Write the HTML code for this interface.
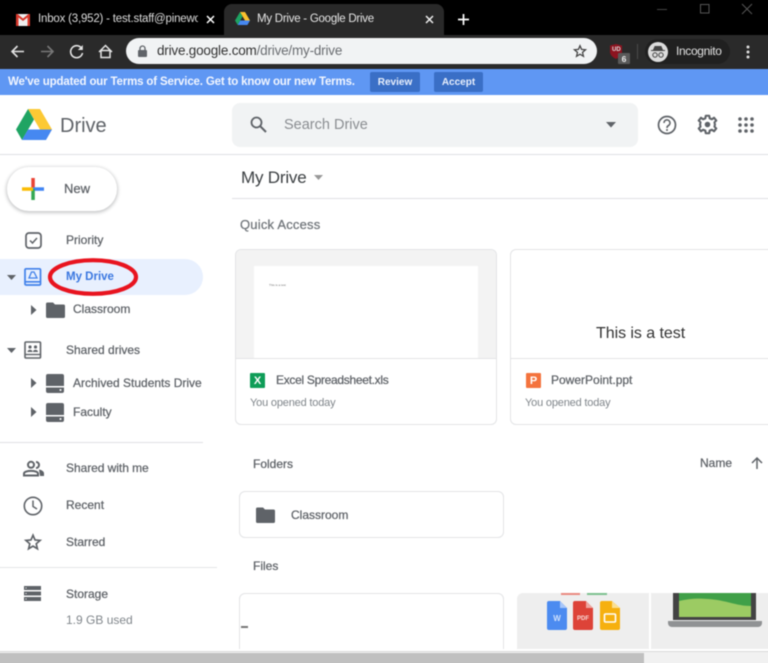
<!DOCTYPE html>
<html><head><meta charset="utf-8"><style>
html,body{margin:0;padding:0;background:#fff}
#w{position:relative;width:768px;height:663px;overflow:hidden;background:#fff}
#p{position:absolute;left:0;top:0;width:768px;height:663px;background:#fff;font-family:"Liberation Sans",sans-serif;filter:blur(.4px)}
.a{position:absolute}
.t{position:absolute;white-space:nowrap;font-size:12px;line-height:16px;color:#5f6368}
.m{-webkit-text-stroke:.25px currentColor}
svg{position:absolute;overflow:visible}
.card{position:absolute;box-sizing:border-box;background:#fff;border:1px solid #e3e4e6;border-radius:6px;overflow:hidden}
</style></head><body><div id="w"><div id="p">
<!-- chrome -->
<div class="a" style="left:-6px;top:-6px;width:780px;height:41px;background:#000"></div>
<div class="a" style="left:224px;top:4px;width:220px;height:31px;background:#292929;border-radius:8px 8px 0 0"></div>
<div class="a" style="left:-6px;top:35px;width:780px;height:34px;background:#2a2a2a"></div>
<svg style="left:16px;top:14px" width="14" height="12" viewBox="0 0 14 12"><rect width="14" height="12" fill="#eee"/><path d="M0 0V12H2.5V3.5L7 7L11.5 3.5V12H14V0H12.5L7 4.5L1.5 0Z" fill="#d8382c"/></svg>
<div class="t" style="left:38px;top:11px;color:#dcdcdc;width:160px;overflow:hidden;font-size:11.500px;letter-spacing:-.2px">Inbox (3,952) - test.staff@pinewo</div>
<svg style="left:206px;top:15px" width="9" height="9"><path d="M1 1L8 8M8 1L1 8" stroke="#fff" stroke-width="1.5"/></svg>
<svg style="left:235px;top:12px" width="15" height="14" viewBox="0 0 15 14"><path d="M5 0H10L15 8.5H10Z" fill="#fbc02d"/><path d="M5 0L7.5 4.5L2.7 13L0 8.5Z" fill="#1ea362"/><path d="M2.7 13L5.2 8.5H15L12.4 13Z" fill="#4688f1"/></svg>
<div class="t" style="left:257px;top:11px;color:#e6e6e6;font-size:11.500px;letter-spacing:-.25px">My Drive - Google Drive</div>
<svg style="left:425px;top:15px" width="9" height="9"><path d="M1 1L8 8M8 1L1 8" stroke="#eee" stroke-width="1.5"/></svg>
<svg style="left:457px;top:13px" width="13" height="13"><path d="M6.5 1V12M1 6.5H12" stroke="#fff" stroke-width="1.7"/></svg>
<svg style="left:0;top:0" width="768" height="18"><path d="M657 9.500H667" stroke="#444"/><rect x="700.500" y="4.500" width="8.500" height="8.500" fill="none" stroke="#555"/><path d="M742 4L752 14M752 4L742 14" stroke="#555"/></svg>
<svg style="left:10px;top:44px" width="15" height="15"><path d="M14 7.500H2M7.500 2L2 7.500L7.500 13" stroke="#e4e4e4" stroke-width="1.600" fill="none"/></svg>
<svg style="left:40px;top:44px" width="15" height="15"><path d="M1 7.500H13M7.500 2L13 7.500L7.500 13" stroke="#777" stroke-width="1.600" fill="none"/></svg>
<svg style="left:69px;top:44px" width="15" height="15"><path d="M12.500 4.200A6 6 0 1 0 13.500 9" stroke="#e4e4e4" stroke-width="1.600" fill="none"/><path d="M13.800 1V6H8.800Z" fill="#e4e4e4"/></svg>
<svg style="left:98px;top:44px" width="15" height="15"><path d="M1 8L7.500 1.500L14 8M3 6.500V13.500H12V6.500Z" stroke="#e4e4e4" stroke-width="1.500" fill="none"/></svg>
<div class="a" style="left:126px;top:38px;width:471px;height:26px;background:#f1f3f4;border-radius:13px"></div>
<svg style="left:137px;top:45px" width="11" height="12"><rect x="1" y="5" width="9" height="7" rx="1" fill="#5f6368"/><path d="M3 5V3.500A2.500 2.500 0 0 1 8 3.500V5" fill="none" stroke="#5f6368" stroke-width="1.300"/></svg>
<div class="t" style="left:157px;top:43px;font-size:13.500px;letter-spacing:-.2px;color:#6b6e72"><span style="color:#333">drive.google.com</span>/drive/my-drive</div>
<svg style="left:573px;top:44px" width="14" height="14" viewBox="0 0 24 24"><path d="M12 3L14.700 9.300L21.500 9.900L16.300 14.400L17.900 21L12 17.500L6.100 21L7.700 14.400L2.500 9.900L9.300 9.300Z" fill="none" stroke="#444" stroke-width="2.200"/></svg>
<svg style="left:609px;top:44px" width="16" height="17"><path d="M1 1.500L7 0L13 1.500V8C13 11 10 13.500 7 15C4 13.500 1 11 1 8Z" fill="#8c1420"/></svg>
<div class="t" style="left:612px;top:46px;font-size:6px;line-height:8px;color:#ddd;font-weight:bold">UD</div>
<div class="a" style="left:618px;top:53px;width:12px;height:11px;background:#5a5a5a;border-radius:1px;color:#eee;font-size:8.500px;font-weight:bold;line-height:12px;text-align:center">6</div>
<div class="a" style="left:637px;top:44px;width:1px;height:15px;background:#4a4a4a"></div>
<div class="a" style="left:645px;top:39px;width:85px;height:25px;background:#202020;border-radius:13px"></div>
<div class="a" style="left:648px;top:42px;width:20px;height:20px;background:#dcdcdc;border-radius:50%"></div>
<svg style="left:650px;top:46px" width="16" height="12"><path d="M3.500 4L5 0.500H11L12.500 4ZM1 4.500H15" fill="#444" stroke="#444"/><circle cx="5" cy="9" r="2.200" fill="none" stroke="#444"/><circle cx="11" cy="9" r="2.200" fill="none" stroke="#444"/></svg>
<div class="t" style="left:676px;top:43px;color:#e0e0e0;letter-spacing:-.35px;font-size:12px">Incognito</div>
<svg style="left:746px;top:45px" width="4" height="14"><circle cx="2" cy="2" r="1.500" fill="#ddd"/><circle cx="2" cy="7" r="1.500" fill="#ddd"/><circle cx="2" cy="12" r="1.500" fill="#ddd"/></svg>
<!-- banner -->
<div class="a" style="left:-6px;top:69px;width:780px;height:26px;background:#5f97f3"></div>
<div class="t" style="left:8px;top:74px;color:#f2f6ff;font-weight:bold;font-size:11.500px;letter-spacing:-.16px">We've updated our Terms of Service. Get to know our new Terms.</div>
<div class="a" style="left:370px;top:72px;width:50px;height:20px;background:#3a6fc6;border-radius:2px;color:#e8effc;font-size:10px;font-weight:bold;line-height:21px;text-align:center">Review</div>
<div class="a" style="left:434px;top:72px;width:49px;height:20px;background:#3a6fc6;border-radius:2px;color:#e8effc;font-size:10px;font-weight:bold;line-height:21px;text-align:center">Accept</div>
<!-- header -->
<svg style="left:16px;top:109px" width="36" height="32" viewBox="0 0 36 32"><path d="M12 0H24L36 20.500H24Z" fill="#fcc934"/><path d="M12 0L18 10.500L6 31L0 20.500Z" fill="#1fa463"/><path d="M6 31L12 20.500H36L30 31Z" fill="#4688f1"/></svg>
<div class="t" style="left:60px;top:112px;font-size:20px;line-height:28px">Drive</div>
<div class="a" style="left:232px;top:103px;width:406px;height:44px;background:#f1f3f4;border-radius:8px"></div>
<svg style="left:250px;top:116px" width="17" height="17"><circle cx="6.500" cy="6.500" r="5" fill="none" stroke="#5f6368" stroke-width="1.800"/><path d="M10.500 10.500L16 16" stroke="#5f6368" stroke-width="2"/></svg>
<div class="t" style="left:284px;top:116px;font-size:14.500px;line-height:18px;color:#8a8d91">Search Drive</div>
<svg style="left:606px;top:122px" width="10" height="6"><path d="M0 0H10L5 5.500Z" fill="#5f6368"/></svg>
<svg style="left:657px;top:115px" width="20" height="20"><circle cx="10" cy="10" r="8.500" fill="none" stroke="#5f6368" stroke-width="1.700"/><path d="M7 8A3 3 0 1 1 11.500 10.500C10.500 11 10 11.500 10 13" fill="none" stroke="#5f6368" stroke-width="1.600"/><circle cx="10" cy="15" r="1" fill="#5f6368"/></svg>
<svg style="left:697px;top:114px" width="21" height="21" viewBox="0 0 24 24"><path d="M10 2H14L14.500 5L17 6L19.500 4.300L22 7.500L20 9.500L20.500 12L20 14.500L22 16.500L19.500 19.700L17 18L14.500 19L14 22H10L9.500 19L7 18L4.500 19.700L2 16.500L4 14.500L3.500 12L4 9.500L2 7.500L4.500 4.300L7 6L9.500 5Z" fill="none" stroke="#5f6368" stroke-width="2.400" stroke-linejoin="round"/><circle cx="12" cy="12" r="3.200" fill="#5f6368"/></svg>
<svg style="left:738px;top:117px" width="16" height="16" fill="#5f6368"><circle cx="2" cy="2" r="1.800"/><circle cx="8" cy="2" r="1.800"/><circle cx="14" cy="2" r="1.800"/><circle cx="2" cy="8" r="1.800"/><circle cx="8" cy="8" r="1.800"/><circle cx="14" cy="8" r="1.800"/><circle cx="2" cy="14" r="1.800"/><circle cx="8" cy="14" r="1.800"/><circle cx="14" cy="14" r="1.800"/></svg>
<div class="a" style="left:-6px;top:154px;width:780px;height:1px;background:#dfe1e3"></div>
<!-- sidebar -->
<div class="a" style="left:7px;top:167px;width:110px;height:44px;background:#fff;border-radius:22px;box-shadow:0 1px 3px 1px rgba(60,64,67,.28)"></div>
<svg style="left:22px;top:178px" width="22" height="22"><rect x="9.300" y="0" width="3.500" height="11" fill="#ea4335"/><rect x="11" y="9.300" width="11" height="3.500" fill="#4285f4"/><rect x="9.300" y="11" width="3.500" height="11" fill="#34a853"/><rect x="0" y="9.300" width="11" height="3.500" fill="#fbbc05"/></svg>
<div class="t m" style="left:64px;top:181px;font-size:13px;color:#5f6368">New</div>
<svg style="left:25px;top:232px" width="17" height="17"><rect x="1" y="1" width="15" height="15" rx="3" fill="none" stroke="#5f6368" stroke-width="1.700"/><path d="M5 8.500L7.500 11L12 6" fill="none" stroke="#5f6368" stroke-width="1.500"/></svg>
<div class="t m" style="left:66px;top:232px;font-size:12px">Priority</div>
<div class="a" style="left:-6px;top:259px;width:209px;height:36px;background:#e8f0fe;border-radius:0 18px 18px 0"></div>
<svg style="left:7px;top:275px" width="10" height="5"><path d="M0 0H9L4.500 5Z" fill="#5f6368"/></svg>
<svg style="left:24px;top:268px" width="18" height="18"><path d="M2 .800H15.500A1 1 0 0 1 16.500 1.800V16.300A1 1 0 0 1 15.500 17H2A1 1 0 0 1 1 16V1.800A1 1 0 0 1 2 .800ZM1 13.800H16.500" fill="none" stroke="#3f80ea" stroke-width="1.700"/><path d="M7.500 4H10L13 10H5Z" fill="none" stroke="#3f80ea" stroke-width="1.300"/></svg>
<div class="t" style="left:66px;top:269px;color:#3a77e0;font-weight:bold;font-size:11.500px">My Drive</div>
<svg style="left:48px;top:258px" width="91" height="38"><ellipse cx="45" cy="19" rx="43" ry="16.800" fill="none" stroke="#e8141f" stroke-width="4.200"/></svg>
<svg style="left:31px;top:305px" width="6" height="10"><path d="M0 0L5.500 5L0 10Z" fill="#5f6368"/></svg>
<svg style="left:46px;top:302px" width="19" height="16"><path d="M1.500 0.500H7L9 2.500H17.500A1.500 1.500 0 0 1 19 4V14.500A1.500 1.500 0 0 1 17.500 16H1.500A1.500 1.500 0 0 1 0 14.500V2A1.500 1.500 0 0 1 1.500 0.500Z" fill="#5f6368"/></svg>
<div class="t m" style="left:73px;top:301px">Classroom</div>
<svg style="left:7px;top:348px" width="10" height="5"><path d="M0 0H9L4.500 5Z" fill="#5f6368"/></svg>
<svg style="left:24px;top:341px" width="18" height="18"><rect x="1" y="1" width="15.500" height="16" rx="1" fill="none" stroke="#5f6368" stroke-width="1.600"/><path d="M1 13.500H16.500" stroke="#5f6368" stroke-width="1.400"/><circle cx="6" cy="6" r="1.600" fill="#5f6368"/><circle cx="11.500" cy="6" r="1.600" fill="#5f6368"/><path d="M3.500 11C3.500 8 8.500 8 8.500 11ZM9 11C9 8 14 8 14 11Z" fill="#5f6368"/></svg>
<div class="t m" style="left:66px;top:342px">Shared drives</div>
<svg style="left:31px;top:378px" width="6" height="10"><path d="M0 0L5.500 5L0 10Z" fill="#5f6368"/></svg>
<svg style="left:46px;top:374px" width="18" height="19"><path d="M2 0H16A2 2 0 0 1 18 2V12H0V2A2 2 0 0 1 2 0ZM0 13.500H18V17A2 2 0 0 1 16 19H2A2 2 0 0 1 0 17Z" fill="#5f6368"/><circle cx="14.500" cy="16" r="1" fill="#fff"/></svg>
<div class="t m" style="left:73px;top:375px">Archived Students Drive</div>
<svg style="left:31px;top:407px" width="6" height="10"><path d="M0 0L5.500 5L0 10Z" fill="#5f6368"/></svg>
<svg style="left:46px;top:403px" width="18" height="19"><path d="M2 0H16A2 2 0 0 1 18 2V12H0V2A2 2 0 0 1 2 0ZM0 13.500H18V17A2 2 0 0 1 16 19H2A2 2 0 0 1 0 17Z" fill="#5f6368"/><circle cx="14.500" cy="16" r="1" fill="#fff"/></svg>
<div class="t m" style="left:73px;top:404px">Faculty</div>
<div class="a" style="left:-6px;top:442px;width:209px;height:1px;background:#e0e1e3"></div>
<svg style="left:23px;top:461px" width="21" height="15"><circle cx="8" cy="3.800" r="3" fill="none" stroke="#5f6368" stroke-width="2"/><path d="M1 14.500V12.500C1 9 15 9 15 12.500V14.500Z" fill="none" stroke="#5f6368" stroke-width="2"/><path d="M13 1A3 3 0 0 1 13 7" fill="none" stroke="#5f6368" stroke-width="2"/><path d="M16 8.500C19 9 21 10.500 21 12.500V15H17Z" fill="#5f6368"/></svg>
<div class="t m" style="left:66px;top:460px;letter-spacing:-.05px">Shared with me</div>
<svg style="left:23px;top:496px" width="20" height="20"><circle cx="10" cy="10" r="8.700" fill="none" stroke="#5f6368" stroke-width="1.600"/><path d="M10 4.500V10.500L14 13" fill="none" stroke="#5f6368" stroke-width="1.500"/></svg>
<div class="t m" style="left:66px;top:497px">Recent</div>
<svg style="left:24px;top:533px" width="18" height="18" viewBox="0 0 24 24"><path d="M12 3L14.700 9.300L21.500 9.900L16.300 14.400L17.900 21L12 17.500L6.100 21L7.700 14.400L2.500 9.900L9.300 9.300Z" fill="none" stroke="#5f6368" stroke-width="2.200"/></svg>
<div class="t m" style="left:66px;top:534px">Starred</div>
<div class="a" style="left:-6px;top:567px;width:223px;height:1px;background:#e4e5e7"></div>
<svg style="left:24px;top:586px" width="18" height="15" fill="#5f6368"><rect width="17" height="4"/><rect y="5.500" width="17" height="4"/><rect y="11" width="17" height="4"/><g fill="#fff"><rect x="1.500" y="1.500" width="1" height="1"/><rect x="1.500" y="7" width="1" height="1"/><rect x="1.500" y="12.500" width="1" height="1"/></g></svg>
<div class="t m" style="left:66px;top:586px">Storage</div>
<div class="t" style="left:66px;top:612px;color:#80868b">1.9 GB used</div>
<!-- main -->
<div class="t" style="left:241px;top:168px;font-size:17px;line-height:20px;color:#3c4043;letter-spacing:-.2px">My Drive</div>
<svg style="left:314px;top:175px" width="10" height="5"><path d="M0 0H9L4.500 5Z" fill="#999"/></svg>
<div class="a" style="left:232px;top:198px;width:542px;height:1px;background:#e0e1e3"></div>
<div class="t m" style="left:240px;top:217px;font-size:13px;letter-spacing:.2px;color:#70757a">Quick Access</div>
<div class="card" style="left:235px;top:249px;width:262px;height:176px">
 <div class="a" style="left:0;top:0;width:262px;height:109px;background:#f3f3f3"></div>
 <div class="a" style="left:18px;top:16px;width:224px;height:93px;background:#fff"></div>
 <div class="t" style="left:33px;top:33px;font-size:3px;line-height:5px;color:#777">This is a test</div>
 <div class="a" style="left:0;top:108px;width:262px;height:1px;background:#e3e4e6"></div>
</div>
<svg style="left:250px;top:373px" width="15" height="15"><rect width="15" height="15" rx="1" fill="#0f9d58"/></svg>
<div class="t" style="left:250px;top:373px;width:15px;text-align:center;color:#fff;font-size:11px;line-height:16px;font-weight:bold">X</div>
<div class="t m" style="left:276px;top:372px;letter-spacing:-.3px">Excel Spreadsheet.xls</div>
<div class="t" style="left:250px;top:395px;font-size:11px;letter-spacing:-.18px;color:#80868b">You opened today</div>
<div class="card" style="left:510px;top:249px;width:270px;height:176px">
 <div class="a" style="left:0;top:108px;width:270px;height:1px;background:#e3e4e6"></div>
</div>
<div class="t" style="left:596px;top:324px;font-size:16px;letter-spacing:-.05px;line-height:20px;color:#333">This is a test</div>
<svg style="left:526px;top:373px" width="15" height="15"><rect width="15" height="15" rx="1" fill="#f4733d"/></svg>
<div class="t" style="left:526px;top:373px;width:15px;text-align:center;color:#fff;font-size:11px;line-height:16px;font-weight:bold">P</div>
<div class="t m" style="left:551px;top:372px">PowerPoint.ppt</div>
<div class="t" style="left:525px;top:395px;font-size:11px;letter-spacing:-.18px;color:#80868b">You opened today</div>
<div class="t m" style="left:253px;top:456px">Folders</div>
<div class="t m" style="left:700px;top:455px">Name</div>
<svg style="left:751px;top:457px" width="12" height="12"><path d="M6 12V1M1 6L6 1L11 6" fill="none" stroke="#5f6368" stroke-width="1.500"/></svg>
<div class="card" style="left:239px;top:491px;width:265px;height:47px"></div>
<svg style="left:256px;top:507px" width="19" height="16"><path d="M1.500 0.500H7L9 2.500H17.500A1.500 1.500 0 0 1 19 4V14.500A1.500 1.500 0 0 1 17.500 16H1.500A1.500 1.500 0 0 1 0 14.500V2A1.500 1.500 0 0 1 1.500 0.500Z" fill="#5f6368"/></svg>
<div class="t m" style="left:291px;top:507px">Classroom</div>
<div class="t m" style="left:253px;top:558px">Files</div>
<div class="card" style="left:239px;top:593px;width:265px;height:80px"></div>
<div class="a" style="left:241px;top:626px;width:7px;height:2px;background:#777"></div>
<div class="a" style="left:517px;top:593px;width:257px;height:56px;background:#eeeeee;border-radius:6px 0 0 0"></div>
<div class="a" style="left:649px;top:593px;width:2px;height:56px;background:#fff"></div>
<div class="a" style="left:561px;top:593px;width:19px;height:2px;background:#ea8a80"></div>
<div class="a" style="left:587px;top:593px;width:20px;height:2px;background:#7cc08f"></div>
<svg style="left:547px;top:601px" width="74" height="29"><path d="M2 0H13L20 7V27A2 2 0 0 1 18 29H2A2 2 0 0 1 0 27V2A2 2 0 0 1 2 0Z" fill="#4c8bf0"/><path d="M28 0H39L46 7V27A2 2 0 0 1 44 29H28A2 2 0 0 1 26 27V2A2 2 0 0 1 28 0Z" fill="#dd4338"/><path d="M55 0H65L73 7V27A2 2 0 0 1 71 29H55A2 2 0 0 1 53 27V2A2 2 0 0 1 55 0Z" fill="#f6b00f"/><path d="M13 0L20 7H13Z" fill="#a8c7fa"/><path d="M39 0L46 7H39Z" fill="#eea7a0"/><path d="M65 0L73 7H65Z" fill="#fbdf90"/><rect x="57.500" y="13" width="11" height="8" rx="1" fill="none" stroke="#fff" stroke-width="1.600"/></svg>
<div class="t" style="left:547px;top:614px;width:20px;text-align:center;font-size:8px;line-height:10px;color:#cfe0fc;font-weight:bold">W</div>
<div class="t" style="left:573px;top:614px;width:20px;text-align:center;font-size:6px;line-height:10px;color:#f8dbd8;font-weight:bold">PDF</div>
<svg style="left:668px;top:593px" width="94" height="34"><path d="M5 0H88V27H5Z" fill="#434343"/><path d="M11 0H83V24H11Z" fill="#9ccb63"/><path d="M11 0H83V13C68 13 58 7 40 6C28 5 20 6 11 8Z" fill="#40a048"/><path d="M0 28H94V30C94 32.500 92 34 90 34H4C2 34 0 32.500 0 30Z" fill="#909294"/></svg>
<div class="a" style="left:-6px;top:651px;width:780px;height:18px;background:#f1f1f1;border-top:1px solid #dadada;box-sizing:border-box"></div>
<div class="a" style="left:-6px;top:653px;width:650px;height:16px;background:#c0c0c0"></div>
<div class="a" style="left:239px;top:649px;width:270px;height:2px;background:#fff"></div>
</div></div></body></html>
